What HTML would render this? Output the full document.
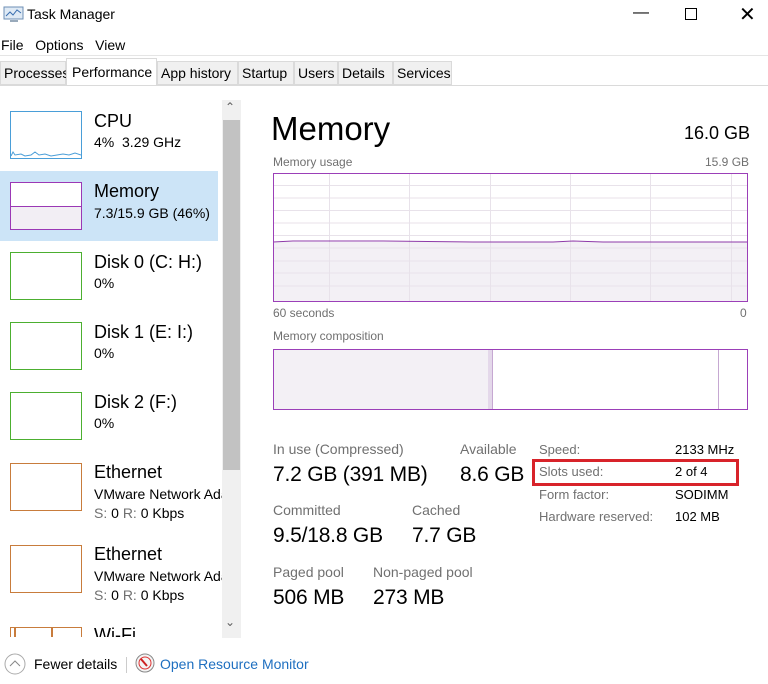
<!DOCTYPE html>
<html><head><meta charset="utf-8"><style>
*{margin:0;padding:0;box-sizing:border-box}
body{width:768px;height:684px;background:#fff;font-family:"Liberation Sans",sans-serif;color:#000;position:relative;overflow:hidden}
.a{position:absolute;white-space:nowrap}
.g{color:#707070}
.tab{position:absolute;top:61px;height:24px;background:#f0f0f0;border:1px solid #dadada;font-size:14px;line-height:22px;padding-left:3px}
.thumb{position:absolute;left:10px;width:72px;height:48px;border:1px solid;background:#fff}
.big{font-size:21px;letter-spacing:-0.2px}
</style></head><body>
<svg class="a" style="left:3px;top:6px" width="22" height="18" viewBox="0 0 22 18"><rect x="1" y="1" width="19" height="12" fill="#dfeaf5" stroke="#6d8fb5"/><path d="M3 10 L7 6 L10 9 L14 4 L18 7" stroke="#3a6fb0" fill="none"/><rect x="7" y="14" width="8" height="2" fill="#9ab"/></svg>
<div class="a" style="left:27px;top:6px;font-size:14px">Task Manager</div>
<div class="a" style="left:633px;top:4px;font-size:16px">&#8212;</div>
<div class="a" style="left:685px;top:8px;width:12px;height:12px;border:1px solid #000"></div>
<div class="a" style="left:739px;top:2px;font-size:20px;font-weight:300">&#x2715;</div>
<div class="a" style="left:1px;top:37px;font-size:14px">File&nbsp;&nbsp; Options&nbsp;&nbsp; View</div>
<div class="a" style="left:0;top:55px;width:768px;height:1px;background:#e5e5e5"></div>
<div class="tab" style="left:0;width:66px">Processes</div>
<div class="a" style="left:66px;top:58px;width:91px;height:28px;background:#fff;border:1px solid #dadada;border-bottom:none;font-size:14px;line-height:26px;padding-left:5px">Performance</div>
<div class="tab" style="left:157px;width:81px">App history</div>
<div class="tab" style="left:238px;width:56px">Startup</div>
<div class="tab" style="left:294px;width:44px">Users</div>
<div class="tab" style="left:338px;width:55px">Details</div>
<div class="tab" style="left:393px;width:59px">Services</div>
<div class="a" style="left:0;top:85px;width:768px;height:1px;background:#dadada"></div>

<div class="a" style="left:0;top:171px;width:218px;height:70px;background:#cce4f7"></div>
<div class="thumb" style="top:111px;border-color:#4a9ed8"><svg width="70" height="46"><path d="M0 44 L2 40 L4 43 L10 42 L14 44 L20 43 L24 40 L28 43 L34 42 L40 44 L46 43 L52 42 L58 43 L64 41 L70 43" stroke="#4a9ed8" fill="none"/></svg></div>
<div class="thumb" style="top:182px;border-color:#9b38b5"><div style="position:absolute;left:0;top:23px;width:70px;height:23px;background:#f2eef4;border-top:1px solid #9b38b5"></div></div>
<div class="thumb" style="top:252px;border-color:#4caf30"></div>
<div class="thumb" style="top:322px;border-color:#4caf30"></div>
<div class="thumb" style="top:392px;border-color:#4caf30"></div>
<div class="thumb" style="top:463px;border-color:#c87c3c"></div>
<div class="thumb" style="top:545px;border-color:#c87c3c"></div>
<div class="a" style="left:10px;top:627px;width:72px;height:10px;border:1px solid #c87c3c;border-bottom:none;overflow:hidden"><div style="position:absolute;left:3px;top:0;width:2px;height:10px;background:#c87c3c"></div><div style="position:absolute;left:40px;top:0;width:2px;height:10px;background:#c87c3c"></div></div>
<div class="a" style="left:94px;top:111px;font-size:18px">CPU</div>
<div class="a" style="left:94px;top:134px;font-size:14px">4%&nbsp; 3.29 GHz</div>
<div class="a" style="left:94px;top:181px;font-size:18px">Memory</div>
<div class="a" style="left:94px;top:205px;font-size:14px">7.3/15.9 GB (46%)</div>
<div class="a" style="left:94px;top:252px;font-size:18px">Disk 0 (C: H:)</div>
<div class="a" style="left:94px;top:275px;font-size:14px">0%</div>
<div class="a" style="left:94px;top:322px;font-size:18px">Disk 1 (E: I:)</div>
<div class="a" style="left:94px;top:345px;font-size:14px">0%</div>
<div class="a" style="left:94px;top:392px;font-size:18px">Disk 2 (F:)</div>
<div class="a" style="left:94px;top:415px;font-size:14px">0%</div>
<div class="a" style="left:94px;top:462px;font-size:18px">Ethernet</div>
<div class="a" style="left:94px;top:486px;font-size:14px;width:128px;overflow:hidden">VMware Network Adapter</div>
<div class="a" style="left:94px;top:505px;font-size:14px"><span class="g">S:</span> 0 <span class="g">R:</span> 0 Kbps</div>
<div class="a" style="left:94px;top:544px;font-size:18px">Ethernet</div>
<div class="a" style="left:94px;top:568px;font-size:14px;width:128px;overflow:hidden">VMware Network Adapter</div>
<div class="a" style="left:94px;top:587px;font-size:14px"><span class="g">S:</span> 0 <span class="g">R:</span> 0 Kbps</div>
<div class="a" style="left:94px;top:625px;font-size:18px;height:12px;overflow:hidden">Wi-Fi</div>
<div class="a" style="left:222px;top:100px;width:19px;height:538px;background:#f0f0f0"></div>
<div class="a" style="left:223px;top:120px;width:17px;height:350px;background:#c2c2c2"></div>
<div class="a" style="left:225px;top:100px;font-size:12px;color:#606060">&#8963;</div>
<div class="a" style="left:225px;top:615px;font-size:12px;color:#606060">&#8964;</div>

<div class="a" style="left:271px;top:110px;font-size:33px">Memory</div>
<div class="a" style="left:684px;top:123px;font-size:18px">16.0 GB</div>
<div class="a g" style="left:273px;top:155px;font-size:12px">Memory usage</div>
<div class="a g" style="left:705px;top:155px;font-size:12px">15.9 GB</div>
<svg class="a" style="left:273px;top:173px" width="475" height="129">
<rect x="0" y="69" width="475" height="60" fill="#f3f0f5"/>
<g stroke="#e8e2ea" stroke-width="1">
<line x1="0" y1="12.5" x2="475" y2="12.5"/><line x1="0" y1="25" x2="475" y2="25"/><line x1="0" y1="37.5" x2="475" y2="37.5"/><line x1="0" y1="50" x2="475" y2="50"/><line x1="0" y1="62.5" x2="475" y2="62.5"/><line x1="0" y1="75" x2="475" y2="75"/><line x1="0" y1="88" x2="475" y2="88"/><line x1="0" y1="100" x2="475" y2="100"/><line x1="0" y1="113" x2="475" y2="113"/>
<line x1="56.5" y1="0" x2="56.5" y2="129"/><line x1="136.5" y1="0" x2="136.5" y2="129"/><line x1="217.5" y1="0" x2="217.5" y2="129"/><line x1="297.5" y1="0" x2="297.5" y2="129"/><line x1="377.5" y1="0" x2="377.5" y2="129"/><line x1="458.5" y1="0" x2="458.5" y2="129"/>
</g>
<path d="M0 69 L20 68 L110 68 L200 69 L280 69 L300 68 L330 69 L475 69" stroke="#8e3aa8" fill="none"/>
<rect x="0.5" y="0.5" width="474" height="128" fill="none" stroke="#9b3fb8"/>
</svg>
<div class="a g" style="left:273px;top:306px;font-size:12px">60 seconds</div>
<div class="a g" style="left:740px;top:306px;font-size:12px">0</div>
<div class="a g" style="left:273px;top:329px;font-size:12px">Memory composition</div>
<svg class="a" style="left:273px;top:349px" width="475" height="61">
<rect x="0" y="0" width="215" height="61" fill="#f3f0f5"/>
<rect x="215" y="0" width="4" height="61" fill="#e4d8ea"/>
<line x1="219.5" y1="0" x2="219.5" y2="61" stroke="#c6a8d2"/>
<line x1="445.5" y1="0" x2="445.5" y2="61" stroke="#c6a8d2"/>
<rect x="0.5" y="0.5" width="474" height="60" fill="none" stroke="#9b3fb8"/>
</svg>

<div class="a g" style="left:273px;top:441px;font-size:14px">In use (Compressed)</div>
<div class="a big" style="left:273px;top:463px">7.2 GB (391 MB)</div>
<div class="a g" style="left:460px;top:441px;font-size:14px">Available</div>
<div class="a big" style="left:460px;top:463px">8.6 GB</div>
<div class="a g" style="left:273px;top:502px;font-size:14px">Committed</div>
<div class="a big" style="left:273px;top:524px">9.5/18.8 GB</div>
<div class="a g" style="left:412px;top:502px;font-size:14px">Cached</div>
<div class="a big" style="left:412px;top:524px">7.7 GB</div>
<div class="a g" style="left:273px;top:564px;font-size:14px">Paged pool</div>
<div class="a big" style="left:273px;top:586px">506 MB</div>
<div class="a g" style="left:373px;top:564px;font-size:14px">Non-paged pool</div>
<div class="a big" style="left:373px;top:586px">273 MB</div>

<div class="a g" style="left:539px;top:442px;font-size:13px">Speed:</div>
<div class="a" style="left:675px;top:442px;font-size:13px">2133 MHz</div>
<div class="a g" style="left:539px;top:464px;font-size:13px">Slots used:</div>
<div class="a" style="left:675px;top:464px;font-size:13px">2 of 4</div>
<div class="a" style="left:532px;top:459px;width:207px;height:27px;border:3px solid #d8232a"></div>
<div class="a g" style="left:539px;top:487px;font-size:13px">Form factor:</div>
<div class="a" style="left:675px;top:487px;font-size:13px">SODIMM</div>
<div class="a g" style="left:539px;top:509px;font-size:13px">Hardware reserved:</div>
<div class="a" style="left:675px;top:509px;font-size:13px">102 MB</div>

<svg class="a" style="left:4px;top:653px" width="22" height="22"><circle cx="11" cy="11" r="10" fill="none" stroke="#aaa"/><path d="M6 13 L11 8 L16 13" stroke="#888" fill="none"/></svg>
<div class="a" style="left:34px;top:656px;font-size:14px">Fewer details</div>
<div class="a" style="left:126px;top:657px;width:1px;height:16px;background:#ccc"></div>
<svg class="a" style="left:135px;top:653px" width="20" height="20"><circle cx="10" cy="10" r="9" fill="#f4f4f4" stroke="#888"/><circle cx="10" cy="10" r="6" fill="none" stroke="#d33"/><path d="M6 6 L12 13" stroke="#c22" stroke-width="2"/></svg>
<div class="a" style="left:160px;top:656px;font-size:14px;color:#1e6fc0">Open Resource Monitor</div>
</body></html>
